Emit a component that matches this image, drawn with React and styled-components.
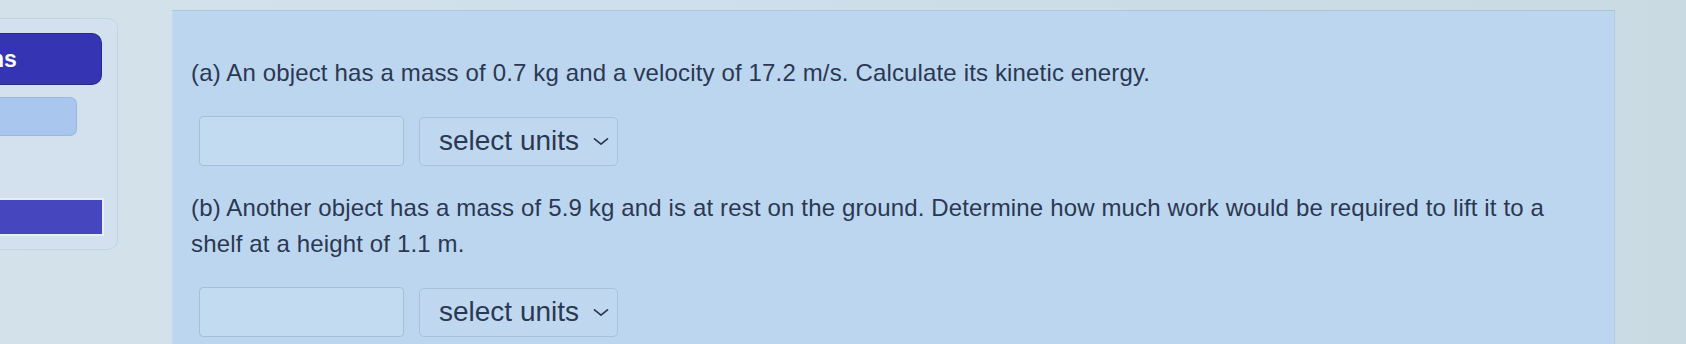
import React from "react";
import styled, { createGlobalStyle } from "styled-components";

const Global = createGlobalStyle`
  html, body {
    margin: 0;
    padding: 0;
    background: #cddce6;
    overflow: hidden;
  }
  #root {
    width: 1686px;
    height: 344px;
  }
`;

const Page = styled.div`
  display: flex;
  width: 1686px;
  height: 344px;
  background: linear-gradient(90deg, #d3e1ea 0%, #cfdfeb 40%, #c9dae2 100%);
  font-family: "Liberation Sans", Arial, sans-serif;
  overflow: hidden;
`;

const Sidebar = styled.nav`
  flex: 0 0 118px;
  height: 232px;
  margin-top: 18px;
  box-sizing: border-box;
  padding-top: 14px;
  background: #d2e1ed;
  border: 1px solid #c3d5e3;
  border-left: none;
  border-radius: 0 10px 10px 0;
  display: flex;
  flex-direction: column;
  align-items: flex-start;
`;

const NavButton = styled.div`
  width: 102px;
  height: 52px;
  box-sizing: border-box;
  background: #3535b4;
  border: 1px solid #2a2a8c;
  border-left: none;
  border-radius: 0 10px 10px 0;
  color: #ffffff;
  font-weight: 700;
  font-size: 23px;
  display: flex;
  align-items: center;
  & > span {
    margin-left: -10px;
  }
`;

const LightTab = styled.div`
  width: 77px;
  height: 39px;
  margin-top: 12px;
  box-sizing: border-box;
  background: #a9c6ee;
  border: 1px solid #9ab8e0;
  border-left: none;
  border-radius: 0 7px 7px 0;
`;

const ProgressBar = styled.div`
  width: 104px;
  height: 38px;
  margin-top: 62px;
  box-sizing: border-box;
  background: #4646be;
  border: 2px solid #e6edf7;
  border-left: none;
`;

const Main = styled.main`
  flex: 0 0 1443px;
  margin-left: 54px;
  margin-top: 10px;
  box-sizing: border-box;
  padding: 44px 40px 0 18px;
  background: #bcd6ef;
  border-top: 1px solid #aec6dc;
  border-left: 1px solid #c4d8ea;
  border-right: 1px solid #b4cce2;
  color: #2b3853;
`;

const Question = styled.p`
  margin: 0;
  font-size: 24px;
  line-height: 36px;
  letter-spacing: 0.15px;
`;

const AnswerRow = styled.div`
  display: flex;
  align-items: center;
  gap: 15px;
  margin: 25px 0 24px 8px;
  height: 50px;
`;

const AnswerInput = styled.div`
  width: 205px;
  height: 50px;
  box-sizing: border-box;
  background: #c3dbf1;
  border: 1px solid #a7bfd6;
  border-radius: 4px;
`;

const UnitSelect = styled.div`
  width: 199px;
  height: 49px;
  box-sizing: border-box;
  display: flex;
  align-items: center;
  justify-content: space-between;
  padding: 0 8px 0 19px;
  background: #bfd8f0;
  border: 1px solid #aac2d9;
  border-radius: 5px;
  font-size: 28px;
  color: #2b3853;
`;

const Chevron = () => (
  <svg width="16" height="9" viewBox="0 0 16 9" fill="none">
    <path d="M1.5 1.8 L8 7.2 L14.5 1.8" stroke="#2b3853" strokeWidth="1.7" strokeLinecap="round" strokeLinejoin="round" />
  </svg>
);

const Answer = () => (
  <AnswerRow>
    <AnswerInput />
    <UnitSelect>
      <span>select units</span>
      <Chevron />
    </UnitSelect>
  </AnswerRow>
);

export default function App() {
  return (
    <>
      <Global />
      <Page>
        <Sidebar>
          <NavButton>
            <span>ns</span>
          </NavButton>
          <LightTab />
          <ProgressBar />
        </Sidebar>
        <Main>
          <Question>
            (a) An object has a mass of 0.7 kg and a velocity of 17.2 m/s. Calculate its kinetic energy.
          </Question>
          <Answer />
          <Question>
            (b) Another object has a mass of 5.9 kg and is at rest on the ground. Determine how much work would be required to lift it to a shelf at a height of 1.1 m.
          </Question>
          <Answer />
        </Main>
      </Page>
    </>
  );
}
